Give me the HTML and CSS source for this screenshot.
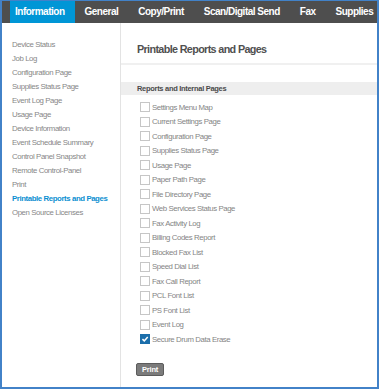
FILE: index.html
```html
<!DOCTYPE html>
<html lang="en">
<head>
    <meta charset="UTF-8">
    <meta name="viewport" content="width=device-width, initial-scale=1.0">
    <title>Printable Reports and Pages</title>
    <link rel="stylesheet" href="styles.css">
</head>
<body>
    <div class="frame">
        <nav class="tabs">
            <a class="tab active">Information</a>
            <a class="tab">General</a>
            <a class="tab">Copy/Print</a>
            <a class="tab">Scan/Digital Send</a>
            <a class="tab">Fax</a>
            <a class="tab">Supplies</a>
        </nav>
        <div class="layout">
            <aside class="sidebar">
                <a class="side-link">Device Status</a>
                <a class="side-link">Job Log</a>
                <a class="side-link">Configuration Page</a>
                <a class="side-link">Supplies Status Page</a>
                <a class="side-link">Event Log Page</a>
                <a class="side-link">Usage Page</a>
                <a class="side-link">Device Information</a>
                <a class="side-link">Event Schedule Summary</a>
                <a class="side-link">Control Panel Snapshot</a>
                <a class="side-link">Remote Control-Panel</a>
                <a class="side-link">Print</a>
                <a class="side-link current">Printable Reports and Pages</a>
                <a class="side-link">Open Source Licenses</a>
            </aside>
            <main class="content">
                <h1 class="page-title">Printable Reports and Pages</h1>
                <h2 class="section-title">Reports and Internal Pages</h2>
                <ul class="report-list">
                    <li><span class="box"></span>Settings Menu Map</li>
                    <li><span class="box"></span>Current Settings Page</li>
                    <li><span class="box"></span>Configuration Page</li>
                    <li><span class="box"></span>Supplies Status Page</li>
                    <li><span class="box"></span>Usage Page</li>
                    <li><span class="box"></span>Paper Path Page</li>
                    <li><span class="box"></span>File Directory Page</li>
                    <li><span class="box"></span>Web Services Status Page</li>
                    <li><span class="box"></span>Fax Activity Log</li>
                    <li><span class="box"></span>Billing Codes Report</li>
                    <li><span class="box"></span>Blocked Fax List</li>
                    <li><span class="box"></span>Speed Dial List</li>
                    <li><span class="box"></span>Fax Call Report</li>
                    <li><span class="box"></span>PCL Font List</li>
                    <li><span class="box"></span>PS Font List</li>
                    <li><span class="box"></span>Event Log</li>
                    <li><span class="box checked"><svg viewBox="0 0 10 10"><path d="M1.8 5.2 L4.1 7.4 L8.4 2.6" fill="none" stroke="#fff" stroke-width="1.9"/></svg></span>Secure Drum Data Erase</li>
                </ul>
                <button class="print-btn">Print</button>
            </main>
        </div>
    </div>
</body>
</html>
```

FILE: styles.css
```css
body {
    margin: 0;
    background: #fff;
    font-family: "Liberation Sans", Arial, sans-serif;
}
.frame {
    width: 379px;
    height: 389px;
    box-sizing: border-box;
    border: 2px solid #4282c8;
    border-top-width: 1px;
    display: flex;
    flex-direction: column;
}
.tabs {
    display: flex;
    height: 22px;
    flex-shrink: 0;
    background-color: #4e4e4e;
    padding-left: 8px;
}
.tab {
    color: #fff;
    font-weight: bold;
    font-size: 10px;
    letter-spacing: -0.5px;
    line-height: 22px;
    padding: 0 10px;
    white-space: nowrap;
}
.tab.active {
    background-color: #0096d6;
    padding: 0 10px 0 5px;
}
.layout {
    flex-grow: 1;
    display: flex;
}
.sidebar {
    width: 108px;
    border-right: 1px solid #e3e3e3;
    padding: 15px 0 0 10px;
    display: flex;
    flex-direction: column;
}
.side-link {
    font-size: 7.8px;
    letter-spacing: -0.4px;
    color: #878787;
    line-height: 14px;
    white-space: nowrap;
}
.side-link.current {
    color: #0b8fd1;
    font-weight: bold;
}
.content {
    flex-grow: 1;
}
.page-title {
    margin: 0;
    font-size: 10.8px;
    letter-spacing: -0.65px;
    line-height: 14px;
    font-weight: bold;
    color: #505050;
    padding: 19px 0 7px 16px;
    border-bottom: 2px solid #f0f0f0;
}
.section-title {
    margin: 17px 0 0;
    background-color: #eeeeee;
    font-size: 7.5px;
    letter-spacing: -0.3px;
    font-weight: bold;
    color: #4a4a4a;
    line-height: 13px;
    padding-left: 16px;
}
.report-list {
    list-style: none;
    margin: 5px 0 0;
    padding: 0 0 0 19px;
}
.report-list li {
    display: flex;
    align-items: center;
    height: 14.5px;
    font-size: 7.8px;
    letter-spacing: -0.4px;
    color: #858585;
    white-space: nowrap;
}
.box {
    width: 8px;
    height: 8px;
    border: 1px solid #c6c6c6;
    margin-right: 2px;
    display: flex;
}
.box.checked {
    background-color: #1b6eab;
    border-color: #1b6eab;
}
.box svg {
    width: 8px;
    height: 8px;
}
.print-btn {
    display: block;
    margin: 16px 0 0 15px;
    background-color: #7b7b7b;
    color: #fff;
    font-family: inherit;
    font-weight: bold;
    font-size: 7.5px;
    letter-spacing: -0.2px;
    border: 1px solid #5c5c5c;
    border-radius: 2px;
    padding: 0 5px;
    height: 13px;
    line-height: 11px;
}
```
